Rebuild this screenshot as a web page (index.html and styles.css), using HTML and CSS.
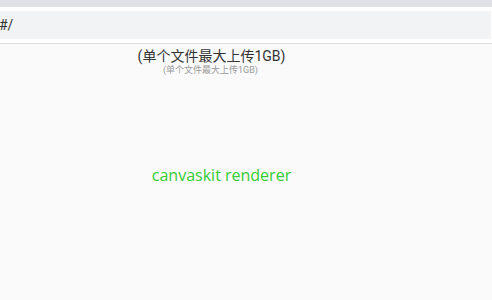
FILE: index.html
```html
<!DOCTYPE html>
<html>
<head>
<meta charset="utf-8">
<link rel="stylesheet" href="styles.css">
</head>
<body>
<div class="chrome">
  <div class="tabstrip"></div>
  <div class="gap"></div>
  <div class="address"><span class="url">#/</span></div>
  <div class="gap2"></div>
</div>
<main class="page">
  <div class="title">(单个文件最大上传1GB)</div>
  <div class="sub">(单个文件最大上传1GB)</div>
  <div class="renderer">canvaskit renderer</div>
</main>
</body>
</html>
```
FILE: styles.css
```css
html, body {
  margin: 0;
  padding: 0;
  width: 492px;
  height: 300px;
  overflow: hidden;
  background: #fafafa;
  font-family: Roboto, "Noto Sans CJK SC", sans-serif;
}
.chrome {
  background: #ffffff;
  border-bottom: 1px solid #dcdcdc;
}
.tabstrip {
  height: 7px;
  background: #dee1e6;
}
.gap { height: 4px; }
.address {
  height: 28px;
  background: #f1f3f4;
  display: flex;
  align-items: center;
  margin-right: 1px;
}
.url {
  font-size: 14px;
  color: #333;
  margin-left: -1px;
}
.gap2 { height: 4px; }
.page {
  width: 435px;
  display: flex;
  flex-direction: column;
  align-items: center;
  padding-top: 3px;
}
.title {
  font-size: 14px;
  line-height: 18px;
  color: #333;
  margin-left: -12px;
}
.sub {
  font-size: 9px;
  line-height: 11px;
  color: #999;
  margin-left: -14px;
}
.renderer {
  margin-top: 88px;
  font-size: 16px;
  color: #33cc33;
  font-family: "Open Sans", sans-serif;
  margin-left: 8px;
}
```
